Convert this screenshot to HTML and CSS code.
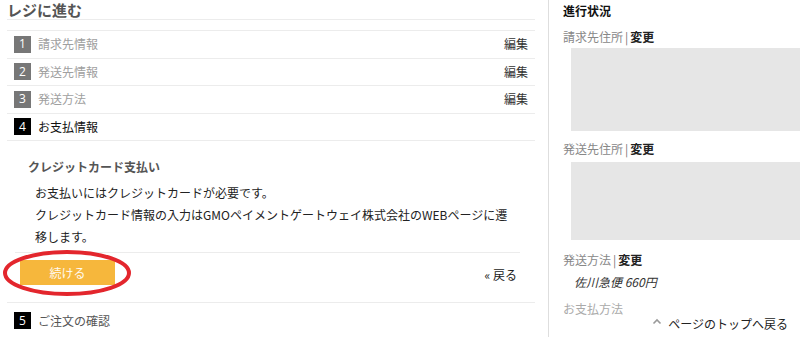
FILE: index.html
```html
<!DOCTYPE html>
<html lang="ja">
<head>
<meta charset="utf-8">
<title>レジに進む</title>
<link rel="stylesheet" href="styles.css">
</head>
<body>
<div class="page">
  <main class="main">
    <h2 class="title">レジに進む</h2>
    <ol class="steps">
      <li class="step done"><span class="num">1</span><span class="label">請求先情報</span><a class="edit" href="#">編集</a></li>
      <li class="step done"><span class="num">2</span><span class="label">発送先情報</span><a class="edit" href="#">編集</a></li>
      <li class="step done"><span class="num">3</span><span class="label">発送方法</span><a class="edit" href="#">編集</a></li>
      <li class="step current"><span class="num">4</span><span class="label">お支払情報</span></li>
    </ol>
    <section class="pay">
      <h3 class="pay-title">クレジットカード支払い</h3>
      <p class="pay-text">お支払いにはクレジットカードが必要です。<br>クレジットカード情報の入力はGMOペイメントゲートウェイ株式会社のWEBページに遷移します。</p>
      <div class="actions">
        <div class="btn-wrap">
          <button class="btn" type="button">続ける</button>
          <svg class="circle" width="132" height="50" viewBox="0 0 132 50"><ellipse cx="66" cy="24" rx="62" ry="21" fill="none" stroke="#e3262d" stroke-width="4"/></svg>
        </div>
        <a class="back" href="#">« 戻る</a>
      </div>
    </section>
    <div class="step next"><span class="num">5</span><span class="label">ご注文の確認</span></div>
  </main>
  <aside class="side">
    <h3 class="side-title">進行状況</h3>
    <div class="group">
      <div class="glabel">請求先住所<span class="sep">|</span><a class="change" href="#">変更</a></div>
      <div class="addr addr1"></div>
    </div>
    <div class="group">
      <div class="glabel">発送先住所<span class="sep">|</span><a class="change" href="#">変更</a></div>
      <div class="addr addr2"></div>
    </div>
    <div class="group g3">
      <div class="glabel">発送方法<span class="sep">|</span><a class="change" href="#">変更</a></div>
      <div class="ship">佐川急便 660円</div>
    </div>
    <div class="group g4">
      <div class="glabel muted">お支払方法</div>
    </div>
  </aside>
</div>
<a class="totop" href="#"><svg width="10" height="7" viewBox="0 0 10 7"><path d="M1.5 5.5 L5 2 L8.5 5.5" fill="none" stroke="#9a9a9a" stroke-width="1.6"/></svg><span>ページのトップへ戻る</span></a>
</body>
</html>
```

FILE: styles.css
```css
* { box-sizing: border-box; }
html, body { margin: 0; padding: 0; background: #fff; }
body {
  font-family: "Noto Sans CJK JP", "Noto Sans", sans-serif;
  font-size: 12px;
  color: #222;
  overflow: hidden;
  height: 337px;
}
a { text-decoration: none; color: inherit; }

.page { display: flex; height: 337px; }

.main { width: 548px; padding-left: 7px; padding-right: 13px; flex: none; }

.title {
  margin: 0;
  font-size: 15px;
  font-weight: bold;
  color: #555;
  line-height: 19px;
  height: 20px;
  border-bottom: 1px solid #ececec;
  margin-bottom: 10px;
}

.steps { list-style: none; margin: 0; padding: 0; border-top: 1px solid #ececec; }

.step {
  display: flex;
  align-items: center;
  height: 27.5px;
  padding: 0 7px;
  border-bottom: 1px solid #ececec;
  line-height: 1;
}
.num {
  width: 17px;
  height: 17px;
  display: flex;
  align-items: center;
  justify-content: center;
  color: #fff;
  font-family: "Open Sans", "Noto Sans", sans-serif;
  font-size: 12px;
  background: #777;
  margin-right: 7px;
  flex: none;
}
.label { flex: 1; }
.done .label { color: #a0a0a0; }
.current .num, .next .num { background: #000; }
.current .label { color: #111; }
.edit { color: #333; }

.pay { padding: 15px 15px 0 8px; }
.pay-title {
  margin: 0;
  padding-left: 13px;
  font-size: 12px;
  font-weight: bold;
  color: #555;
  line-height: 22px;
}
.pay-text {
  margin: 4px 0 0;
  padding-left: 20px;
  padding-right: 10px;
  line-height: 22px;
  color: #222;
}
.actions {
  margin-top: 4px;
  border-top: 1px solid #ececec;
  display: flex;
  align-items: center;
  justify-content: space-between;
  padding: 7px 3px 17px 5px;
}
.btn-wrap { position: relative; }
.btn {
  display: block;
  width: 95px;
  height: 25px;
  border: 0;
  background: #f6b73c;
  color: #fffaf0;
  font-family: inherit;
  font-size: 12px;
  padding: 0;
}
.circle { position: absolute; left: -19px; top: -11px; }
.back { color: #222; padding-top: 4px; }

.next { border-top: 1px solid #ececec; border-bottom: 0; height: 34px; padding-top: 2px; }
.next .label { color: #555; }

.side {
  flex: 1;
  border-left: 1px solid #dedede;
  padding-left: 14px;
}
.side-title { margin: 0; font-size: 12px; font-weight: bold; line-height: 22px; color: #111; }
.group { margin-top: 4px; }
.glabel { line-height: 22px; color: #888; }
.sep { color: #777; margin: 0 2px; }
.change { color: #222; font-weight: bold; }
.muted { color: #aaa; }
.addr { background: #e6e6e6; margin-left: 8px; }
.addr1 { height: 83px; }
.addr2 { height: 78px; margin-top: 2px; }
.group + .group { margin-top: 7px; }
.g3 { margin-top: 9px !important; }
.ship { font-style: italic; color: #333; padding-left: 11px; line-height: 22px; }
.g4 { margin-top: 5px !important; }

.totop {
  position: fixed;
  right: 12px;
  bottom: 2px;
  display: flex;
  align-items: center;
  gap: 6px;
  background: #fff;
  padding: 2px 0 2px 6px;
  color: #222;
  line-height: 18px;
}
.totop svg { margin-top: -5px; }
```
